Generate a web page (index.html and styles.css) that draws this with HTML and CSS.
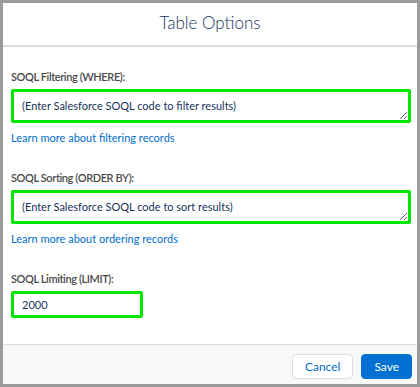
FILE: index.html
```html
<!DOCTYPE html>
<html lang="en">
<head>
    <meta charset="UTF-8">
    <title>Table Options</title>
    <link rel="stylesheet" href="styles.css">
</head>
<body>
    <div class="modal">
        <div class="modal-header">
            <h2>Table Options</h2>
        </div>

        <div class="modal-body">
            <div class="field">
                <label for="where">SOQL Filtering (WHERE):</label>
                <textarea id="where" class="code-input" rows="1">(Enter Salesforce SOQL code to filter results)</textarea>
                <a href="#" class="help-link">Learn more about filtering records</a>
            </div>

            <div class="field">
                <label for="orderby">SOQL Sorting (ORDER BY):</label>
                <textarea id="orderby" class="code-input" rows="1">(Enter Salesforce SOQL code to sort results)</textarea>
                <a href="#" class="help-link">Learn more about ordering records</a>
            </div>

            <div class="field">
                <label for="limit">SOQL Limiting (LIMIT):</label>
                <input type="text" id="limit" class="limit-input" value="2000">
            </div>
        </div>

        <div class="modal-footer">
            <button class="btn btn-neutral">Cancel</button>
            <button class="btn btn-brand">Save</button>
        </div>
    </div>
</body>
</html>
```

FILE: styles.css
```css
/* Salesforce-like palette */
:root {
    --texto-escuro: #16325c;
    --texto-label: #4a4a4a;
    --link: #006dcc;
    --marca: #0070d2;
    --verde: #00e600;
    --borda: #d8dde6;
}

html, body {
    margin: 0;
    height: 100%;
}

body {
    font-family: Lato, "Liberation Sans", sans-serif;
    background: #ffffff;
}

.modal {
    box-sizing: border-box;
    height: 387px;
    border: 3px solid #9b9b9b;
    display: flex;
    flex-direction: column;
}

.modal-header {
    box-sizing: border-box;
    height: 44px;
    padding-bottom: 4px;
    border-bottom: 2px solid #dcdcdc;
    display: flex;
    align-items: center;
    justify-content: center;
}

.modal-header h2 {
    margin: 0;
    font-size: 17px;
    font-weight: 300;
    color: var(--texto-escuro);
}

.modal-body {
    flex: 1;
    padding: 22px 6px 0 8px;
}

.field {
    margin-bottom: 24px;
}

label {
    display: block;
    font-size: 11px;
    font-weight: 600;
    letter-spacing: -0.4px;
    color: var(--texto-label);
    margin-bottom: 4px;
    line-height: 16px;
}

.code-input {
    display: block;
    box-sizing: border-box;
    width: 100%;
    height: 34px;
    padding: 6px 8px;
    font-family: inherit;
    font-size: 11px;
    line-height: 16px;
    color: var(--texto-escuro);
    border: 3px solid var(--verde);
    border-radius: 2px;
    resize: vertical;
}

.help-link {
    display: inline-block;
    margin-top: 7px;
    font-size: 11px;
    line-height: 16px;
    color: var(--link);
    text-decoration: none;
}

.limit-input {
    box-sizing: border-box;
    width: 132px;
    height: 27px;
    padding: 0 8px;
    font-family: inherit;
    font-size: 11px;
    color: var(--texto-escuro);
    border: 3px solid var(--verde);
    border-radius: 2px;
}

.modal-footer {
    height: 40px;
    border-top: 1px solid #dddbda;
    background: #f8f8f8;
    display: flex;
    justify-content: flex-end;
    align-items: flex-end;
    gap: 8px;
    padding: 0 5px 5px;
    box-sizing: border-box;
}

.btn {
    height: 25px;
    padding: 0 12px;
    font-family: inherit;
    font-size: 12px;
    border-radius: 4px;
    cursor: pointer;
}

.btn-neutral {
    background: #ffffff;
    color: var(--link);
    border: 1px solid var(--borda);
}

.btn-brand {
    background: var(--marca);
    color: #ffffff;
    border: 1px solid var(--marca);
}
```
